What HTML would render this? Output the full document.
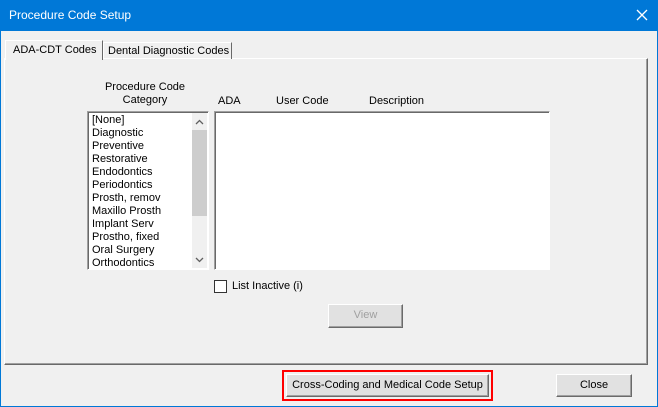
<html><head><style>
*{margin:0;padding:0;box-sizing:border-box}
body{width:658px;height:407px;background:#0078d7;font-family:"Liberation Sans",sans-serif;font-size:11px;color:#000;position:relative;overflow:hidden}
.a{position:absolute}
#client{left:1px;top:31px;width:656px;height:375px;background:#f0f0f0}
.btn{position:absolute;background:#e1e1e1;border:1px solid;border-color:#fff #6a6a6a #6a6a6a #fff;box-shadow:inset -1px -1px 0 #a0a0a0;text-align:center;line-height:21px;font-size:11px}
</style></head><body>
<div class="a" style="left:9px;top:8px;color:#fff;font-size:12px">Procedure Code Setup</div>
<svg class="a" style="left:636px;top:9px" width="12" height="12"><path d="M1 1L11 11M11 1L1 11" stroke="#fff" stroke-width="1.3"/></svg>
<div id="client" class="a"></div>
<!-- panel -->
<div class="a" style="left:4px;top:58px;width:644px;height:307px;border:1px solid;border-color:#fff #696969 #696969 #fff;box-shadow:inset -1px -1px 0 #a0a0a0"></div>
<!-- tabs -->
<div class="a" style="left:5px;top:40px;width:98px;height:20px;background:#f0f0f0;border:1px solid;border-bottom:none;border-color:#fff #696969 #fff #fff;padding:3px 0 0 7px">ADA-CDT Codes</div>
<div class="a" style="left:103px;top:42px;width:129px;height:17px;border:1px solid;border-bottom:none;border-color:#fff #696969 #fff #fff;padding:2px 0 0 4px">Dental Diagnostic Codes</div>
<div class="a" style="left:95px;top:81px;width:100px;text-align:center;line-height:13px">Procedure Code<br>Category</div>
<div class="a" style="left:218px;top:95px">ADA</div>
<div class="a" style="left:276px;top:95px">User Code</div>
<div class="a" style="left:369px;top:95px">Description</div>
<!-- listbox -->
<div class="a" style="left:87px;top:111px;width:122px;height:159px;background:#fff;border:1px solid;border-color:#a0a0a0 #fff #fff #a0a0a0;box-shadow:inset 1px 1px 0 #696969"></div>
<div class="a" style="left:92px;top:114px;line-height:13px;font-size:11px">[None]<br>Diagnostic<br>Preventive<br>Restorative<br>Endodontics<br>Periodontics<br>Prosth, remov<br>Maxillo Prosth<br>Implant Serv<br>Prostho, fixed<br>Oral Surgery<br>Orthodontics</div>
<div class="a" style="left:192px;top:113px;width:15px;height:155px;background:#f0f0f0"></div>
<div class="a" style="left:192px;top:130px;width:15px;height:86px;background:#cdcdcd"></div>
<svg class="a" style="left:195px;top:119px" width="9" height="6"><path d="M1 5L4.5 1.5L8 5" stroke="#606060" stroke-width="1.3" fill="none"/></svg>
<svg class="a" style="left:195px;top:257px" width="9" height="6"><path d="M1 1L4.5 4.5L8 1" stroke="#606060" stroke-width="1.3" fill="none"/></svg>
<!-- right list -->
<div class="a" style="left:214px;top:111px;width:336px;height:159px;background:#fff;border:1px solid;border-color:#a0a0a0 #fff #fff #a0a0a0;box-shadow:inset 1px 1px 0 #696969"></div>
<div class="a" style="left:214px;top:280px;width:13px;height:13px;background:#fff;border:1px solid #333"></div>
<div class="a" style="left:232px;top:280px">List Inactive (i)</div>
<div class="btn" style="left:328px;top:304px;width:75px;height:24px;color:#a0a0a0">View</div>
<div class="a" style="left:282px;top:370px;width:211px;height:31px;border:2px solid #ff0000"></div>
<div class="btn" style="left:286px;top:374px;width:203px;height:23px">Cross-Coding and Medical Code Setup</div>
<div class="btn" style="left:556px;top:374px;width:76px;height:23px">Close</div>
</body></html>
